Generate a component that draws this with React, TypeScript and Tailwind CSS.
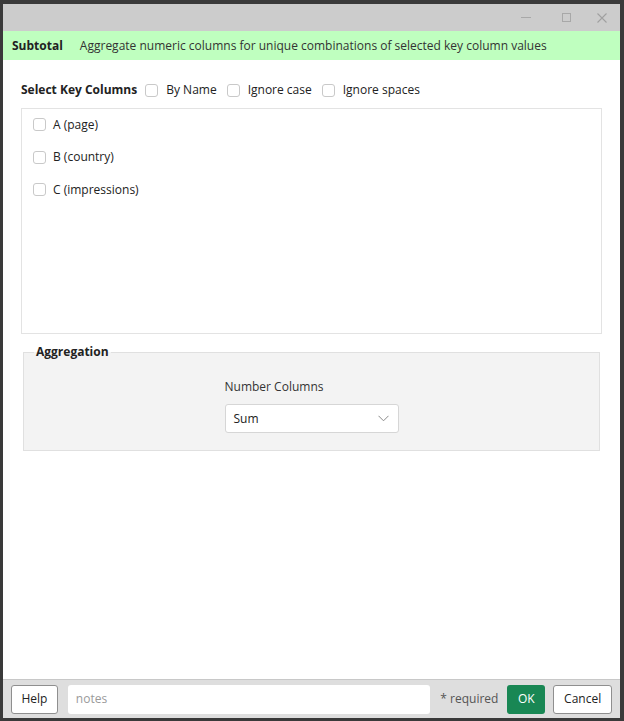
import React from "react";

const COLUMNS = ["A (page)", "B (country)", "C (impressions)"];

function Box() {
  return (
    <span className="inline-block h-[13px] w-[13px] shrink-0 rounded-[3px] border border-[#c9c9c9] bg-white" />
  );
}

export default function App() {
  return (
    <div
      className="h-[721px] w-[624px] bg-[#3a3a3a] pb-[3px] pl-[3px] pr-[4px] pt-[4px] text-[12px] text-[#222]"
      style={{ fontFamily: '"Open Sans", "Noto Sans", sans-serif' }}
    >
      <div className="flex h-full flex-col bg-white">
        {/* title bar */}
        <div className="flex h-[27px] items-center justify-end bg-[#cccccc] pr-[13px]">
          <span className="mb-[1px] block h-px w-[10px] bg-[#a8a8a8]" />
          <span className="ml-[31px] block h-[9px] w-[9px] border border-[#a8a8a8]" />
          <svg width="10" height="10" viewBox="0 0 10 10" className="ml-[26px] stroke-[#a0a0a0]">
            <path d="M0.5 0.5 L9.5 9.5 M9.5 0.5 L0.5 9.5" strokeWidth="1.1" />
          </svg>
        </div>

        {/* header */}
        <div className="flex h-[29px] items-center gap-[17px] bg-[#bfffbf] pl-[9px]">
          <span className="font-bold">Subtotal</span>
          <span className="text-[#333]">
            Aggregate numeric columns for unique combinations of selected key column values
          </span>
        </div>

        <div className="flex flex-1 flex-col px-[18px] pt-[21px]">
          <div className="flex items-center gap-[8px]">
            <span className="font-bold">Select Key Columns</span>
            <Box />
            <span className="mr-[2px]">By Name</span>
            <Box />
            <span className="mr-[2px]">Ignore case</span>
            <Box />
            <span>Ignore spaces</span>
          </div>

          <div className="mt-[9px] flex h-[226px] flex-col gap-[13.5px] border border-[#e3e3e3] px-[11px] pt-[6px]">
            {COLUMNS.map((c) => (
              <label key={c} className="flex h-[19px] items-center gap-[7px]">
                <Box />
                <span>{c}</span>
              </label>
            ))}
          </div>

          <fieldset className="mx-[2px] mt-[9px] flex h-[108px] flex-col items-center border border-[#e0e0e0] bg-[#f3f3f3] pt-[17px]">
            <legend className="ml-[10px] px-[2px] font-bold">Aggregation</legend>
            <div className="ml-[-75px] text-[#333]">Number Columns</div>
            <div className="mt-[8px] flex h-[29px] w-[174px] items-center justify-between rounded-[3px] border border-[#d6d6d6] bg-white pl-[8px] pr-[9px]">
              <span>Sum</span>
              <svg width="11" height="7" viewBox="0 0 11 7" fill="none" className="stroke-[#8a8a8a]">
                <path d="M0.5 0.8 L5.5 5.8 L10.5 0.8" strokeWidth="1" />
              </svg>
            </div>
          </fieldset>
        </div>

        {/* footer */}
        <div className="flex h-[39px] items-center gap-[10px] whitespace-nowrap border-t border-[#c8c8c8] bg-[#dedede] pl-[8px] pr-[8px]">
          <button className="h-[29px] w-[47px] rounded-[3px] border border-[#8f8f8f] bg-white text-[#222]">
            Help
          </button>
          <div className="flex h-[29px] w-[364px] items-center rounded-[3px] bg-white pl-[8px] text-[#9a9a9a]">
            notes
          </div>
          <span className="text-[#555]">* required</span>
          <button className="ml-[-1px] h-[29px] w-[38px] rounded-[3px] bg-[#198754] text-white">
            OK
          </button>
          <button className="ml-[-2px] h-[29px] w-[59px] rounded-[3px] border border-[#8f8f8f] bg-white text-[#222]">
            Cancel
          </button>
        </div>
      </div>
    </div>
  );
}
